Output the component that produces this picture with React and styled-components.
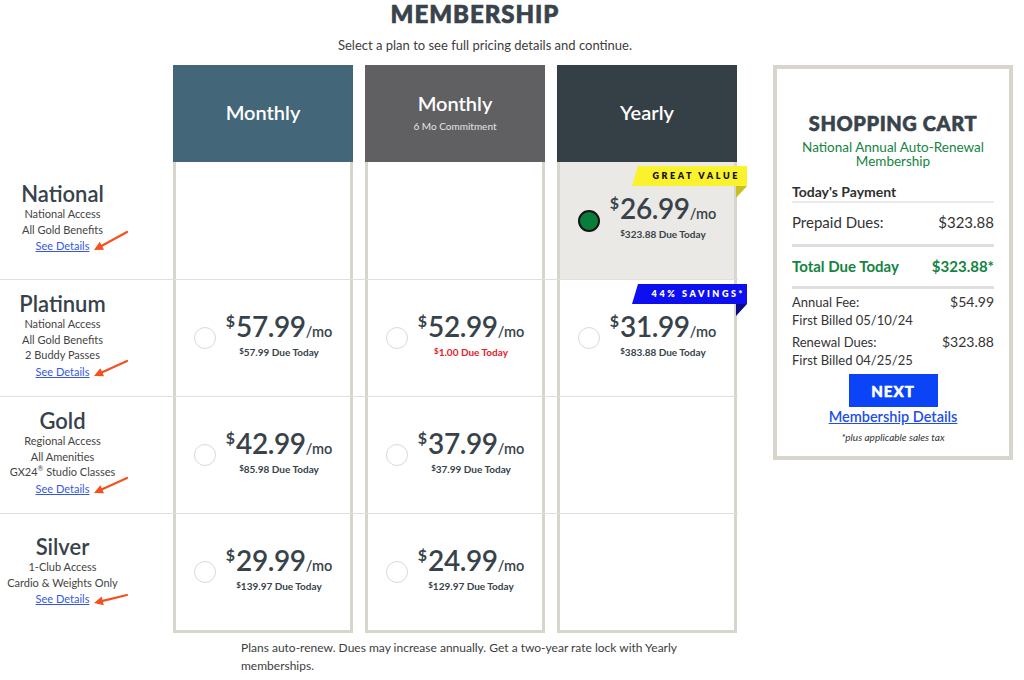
import React from "react";
import styled, { createGlobalStyle } from "styled-components";

const INK = "#37424a";
const COL_BORDER = "#d8d5cc";
const ROW_LINE = "#e2dfd8";
const GREEN = "#13843f";
const LINK = "#3558e3";

const GlobalStyle = createGlobalStyle`
  html, body { margin: 0; padding: 0; background: #fff; }
  body { font-family: Lato, "Open Sans", "DejaVu Sans", sans-serif; color: ${INK}; }
  * { box-sizing: border-box; }
`;

const Page = styled.div`
  width: 1024px;
  height: 680px;
  overflow: hidden;
`;

const Heading = styled.header`
  width: 960px;
  text-align: center;
  margin-bottom: 11px;
`;

const Title = styled.h1`
  margin: 0;
  padding-right: 10px;
  font-family: "Lato Black", Lato, sans-serif;
  font-weight: 900;
  font-size: 24px;
  line-height: 28px;
  letter-spacing: 1px;
  color: #38434b;
  -webkit-text-stroke: 0.7px #38434b;
`;

const Subtitle = styled.p`
  margin: 8px 0 0;
  padding-left: 10px;
  font-size: 13px;
  line-height: 18px;
  color: #3d3d3d;
`;

const Content = styled.div`
  display: flex;
  align-items: flex-start;
`;

const Main = styled.main`
  width: 773px;
  display: flex;
  flex-direction: column;
`;

const HeadRow = styled.div`
  display: flex;
  padding-left: 173px;
`;

const HeadCell = styled.div`
  width: 180px;
  height: 97px;
  padding-bottom: 4px;
  background: ${(p) => p.$bg};
  color: #fff;
  display: flex;
  flex-direction: column;
  align-items: center;
  justify-content: center;
  & + & {
    margin-left: ${(p) => p.$gap}px;
  }
`;

const HeadTitle = styled.div`
  font-weight: 600;
  font-size: 20px;
  line-height: 24px;
`;

const HeadSub = styled.div`
  margin-top: 4px;
  font-size: 10px;
  line-height: 14px;
  color: #e4e4e4;
`;

const Row = styled.div`
  display: flex;
  width: 738px;
  height: ${(p) => (p.$last ? 120 : 117)}px;
  border-top: ${(p) => (p.$divided ? `1px solid ${ROW_LINE}` : "none")};
`;

const LabelCell = styled.div`
  width: 173px;
  padding: 0 48px 6px 0;
  display: flex;
  flex-direction: column;
  align-items: center;
  justify-content: center;
  text-align: center;
`;

const PlanName = styled.div`
  font-weight: 600;
  font-size: 22px;
  line-height: 25px;
  color: ${INK};
`;

const PlanFeature = styled.div`
  font-size: 11px;
  line-height: 15.5px;
  color: #444;
  white-space: nowrap;
`;

const Mark = styled.sup`
  font-size: 7px;
  line-height: 0;
`;

const DetailsLink = styled.a`
  position: relative;
  margin-top: 1px;
  font-size: 11px;
  line-height: 15.5px;
  color: ${LINK};
  text-decoration: underline;
  cursor: pointer;
`;

const ArrowSvg = styled.svg`
  position: absolute;
  left: calc(100% + 3px);
  top: -8px;
  overflow: visible;
`;

const PlanCell = styled.div`
  position: relative;
  width: 180px;
  border-left: 3px solid ${COL_BORDER};
  border-right: 3px solid ${COL_BORDER};
  border-bottom: ${(p) => (p.$last ? `3px solid ${COL_BORDER}` : "none")};
  background: ${(p) => (p.$selected ? "#ebe9e5" : "transparent")};
  display: flex;
  align-items: center;
  justify-content: center;
  gap: 10px;
  & + & {
    margin-left: ${(p) => p.$gap}px;
  }
`;

const Radio = styled.span`
  flex-shrink: 0;
  width: 22px;
  height: 22px;
  border-radius: 50%;
  background: ${(p) => (p.$checked ? "#0b7d3a" : "#fff")};
  border: ${(p) => (p.$checked ? "2px solid #141414" : "1px solid #dcd9d1")};
`;

const PriceBlock = styled.div`
  padding-bottom: 10px;
  text-align: center;
`;

const PriceLine = styled.div`
  display: flex;
  align-items: baseline;
  justify-content: center;
  font-weight: 600;
  color: ${INK};
  white-space: nowrap;
`;

const Dollar = styled.span`
  align-self: flex-start;
  margin: 5px 1px 0 0;
  font-weight: 700;
  font-size: 16px;
  line-height: 15px;
`;

const Amount = styled.span`
  font-size: 28px;
  line-height: 36px;
  letter-spacing: -0.4px;
`;

const Per = styled.span`
  font-size: 14.5px;
`;

const DueLine = styled.div`
  font-weight: 700;
  font-size: 10px;
  line-height: 14px;
  color: ${(p) => (p.$red ? "#e8202a" : INK)};
  white-space: nowrap;
`;

const DueDollar = styled.span`
  font-size: 8px;
  vertical-align: 2px;
`;

const Ribbon = styled.div`
  position: absolute;
  top: 4px;
  right: -13px;
  width: 115px;
  display: flex;
  flex-direction: column;
  z-index: 2;
`;

const RibbonBand = styled.div`
  height: 20px;
  background: ${(p) => p.$bg};
  color: ${(p) => p.$fg};
  clip-path: polygon(6px 0, 100% 0, 100% 100%, 0 100%);
  font-weight: 800;
  font-size: 9px;
  line-height: 20px;
  letter-spacing: 2.6px;
  text-align: right;
  padding-right: ${(p) => p.$pad}px;
  white-space: nowrap;
`;

const RibbonFold = styled.div`
  align-self: flex-end;
  width: 11px;
  height: 12px;
  background: ${(p) => p.$bg};
  clip-path: polygon(0 0, 100% 0, 0 100%);
`;

const Footer = styled.p`
  margin: 6px 0 0 241px;
  width: 445px;
  font-size: 12px;
  line-height: 18px;
  color: #3d3d3d;
`;

const Cart = styled.aside`
  width: 240px;
  border: 4px solid ${COL_BORDER};
  padding: 42px 15px 12px;
  display: flex;
  flex-direction: column;
`;

const CartTitle = styled.h2`
  margin: 0;
  font-family: "Lato Black", Lato, sans-serif;
  font-weight: 900;
  font-size: 20px;
  line-height: 24px;
  letter-spacing: 0.6px;
  color: #38434b;
  text-align: center;
  -webkit-text-stroke: 0.6px #38434b;
`;

const CartPlan = styled.div`
  margin-top: 5px;
  font-size: 13.5px;
  line-height: 14px;
  color: ${GREEN};
  text-align: center;
`;

const SectionHead = styled.div`
  margin-top: 15px;
  font-weight: 700;
  font-size: 14px;
  line-height: 18px;
  color: #2f2f2f;
  border-bottom: 2px solid #ebebeb;
`;

const CartRow = styled.div`
  display: flex;
  justify-content: space-between;
  padding: ${(p) => (p.$total ? "9px 0 10px" : "9px 0 12px")};
  font-size: 15px;
  line-height: 20px;
  font-weight: ${(p) => (p.$total ? 700 : 400)};
  color: ${(p) => (p.$total ? GREEN : "#333")};
  border-bottom: 3px solid #dfdfdf;
`;

const DetailGroup = styled.div`
  padding-top: 4px;
`;

const DetailRow = styled.div`
  display: flex;
  justify-content: space-between;
  font-size: 13px;
  line-height: 18px;
  color: #333;
`;

const DetailValue = styled.span`
  font-size: 14px;
`;

const NextButton = styled.button`
  align-self: center;
  margin-top: 5px;
  width: 89px;
  height: 33px;
  border: none;
  background: #0a44f6;
  color: #fff;
  font-family: "Lato Black", Lato, sans-serif;
  font-weight: 900;
  font-size: 15px;
  letter-spacing: 1px;
  -webkit-text-stroke: 0.5px #fff;
  cursor: pointer;
`;

const CartLink = styled.a`
  align-self: center;
  font-weight: 600;
  font-size: 14.5px;
  line-height: 20px;
  color: #1d4fe8;
  text-decoration: underline;
  cursor: pointer;
`;

const TaxNote = styled.div`
  margin-top: 2.5px;
  font-style: italic;
  font-size: 10px;
  line-height: 14px;
  color: #333;
  text-align: center;
`;

function Arrow({ drop }) {
  const tip = [2, 20];
  const tail = [35, 20 - drop];
  const dx = tail[0] - tip[0];
  const dy = tail[1] - tip[1];
  const len = Math.hypot(dx, dy);
  const ux = dx / len;
  const uy = dy / len;
  const bx = tip[0] + ux * 9;
  const by = tip[1] + uy * 9;
  const px = -uy * 4.5;
  const py = ux * 4.5;
  const pts = `${tip[0]},${tip[1]} ${bx + px},${by + py} ${bx - px},${by - py}`;
  return (
    <ArrowSvg width="38" height="24" viewBox="0 0 38 24">
      <line x1={bx} y1={by} x2={tail[0]} y2={tail[1]} stroke="#f4511e" strokeWidth="2.2" strokeLinecap="round" />
      <polygon points={pts} fill="#f4511e" />
    </ArrowSvg>
  );
}

const headers = [
  { title: "Monthly", bg: "#436679" },
  { title: "Monthly", sub: "6 Mo Commitment", bg: "#606062" },
  { title: "Yearly", bg: "#343f46" },
];

const gaps = [0, 13, 12];

const rows = [
  {
    name: "National",
    features: ["National Access", "All Gold Benefits"],
    drop: 18,
    cells: [
      null,
      null,
      { price: "26.99", due: "323.88", selected: true, ribbon: "value" },
    ],
  },
  {
    name: "Platinum",
    features: ["National Access", "All Gold Benefits", "2 Buddy Passes"],
    drop: 15,
    cells: [
      { price: "57.99", due: "57.99" },
      { price: "52.99", due: "1.00", red: true },
      { price: "31.99", due: "383.88", ribbon: "savings" },
    ],
  },
  {
    name: "Gold",
    features: [
      "Regional Access",
      "All Amenities",
      <>
        GX24<Mark>®</Mark> Studio Classes
      </>,
    ],
    drop: 15,
    cells: [
      { price: "42.99", due: "85.98" },
      { price: "37.99", due: "37.99" },
      null,
    ],
  },
  {
    name: "Silver",
    features: ["1-Club Access", "Cardio & Weights Only"],
    drop: 8,
    cells: [
      { price: "29.99", due: "139.97" },
      { price: "24.99", due: "129.97" },
      null,
    ],
  },
];

const ribbons = {
  value: { text: "GREAT VALUE", bg: "#f9f22c", fg: "#111", fold: "#c7c01f", pad: 7 },
  savings: { text: "44% SAVINGS*", bg: "#0d0ff0", fg: "#fff", fold: "#0a0a86", pad: 2 },
};

function PlanRibbon({ kind }) {
  const r = ribbons[kind];
  return (
    <Ribbon>
      <RibbonBand $bg={r.bg} $fg={r.fg} $pad={r.pad}>
        {r.text}
      </RibbonBand>
      <RibbonFold $bg={r.fold} />
    </Ribbon>
  );
}

export default function App() {
  return (
    <Page>
      <GlobalStyle />
      <Heading>
        <Title>MEMBERSHIP</Title>
        <Subtitle>Select a plan to see full pricing details and continue.</Subtitle>
      </Heading>
      <Content>
        <Main>
          <HeadRow>
            {headers.map((h, i) => (
              <HeadCell key={i} $bg={h.bg} $gap={gaps[i]}>
                <HeadTitle>{h.title}</HeadTitle>
                {h.sub && <HeadSub>{h.sub}</HeadSub>}
              </HeadCell>
            ))}
          </HeadRow>
          {rows.map((r, ri) => {
            const last = ri === rows.length - 1;
            return (
              <Row key={r.name} $divided={ri > 0} $last={last}>
                <LabelCell>
                  <PlanName>{r.name}</PlanName>
                  {r.features.map((f, fi) => (
                    <PlanFeature key={fi}>{f}</PlanFeature>
                  ))}
                  <DetailsLink>
                    See Details
                    <Arrow drop={r.drop} />
                  </DetailsLink>
                </LabelCell>
                {r.cells.map((c, ci) => (
                  <PlanCell key={ci} $gap={gaps[ci]} $last={last} $selected={c && c.selected}>
                    {c && c.ribbon && <PlanRibbon kind={c.ribbon} />}
                    {c && (
                      <>
                        <Radio $checked={c.selected} />
                        <PriceBlock>
                          <PriceLine>
                            <Dollar>$</Dollar>
                            <Amount>{c.price}</Amount>
                            <Per>/mo</Per>
                          </PriceLine>
                          <DueLine $red={c.red}>
                            <DueDollar>$</DueDollar>
                            {c.due} Due Today
                          </DueLine>
                        </PriceBlock>
                      </>
                    )}
                  </PlanCell>
                ))}
              </Row>
            );
          })}
          <Footer>
            Plans auto-renew. Dues may increase annually. Get a two-year rate lock with Yearly memberships.
          </Footer>
        </Main>
        <Cart>
          <CartTitle>SHOPPING CART</CartTitle>
          <CartPlan>
            National Annual Auto-Renewal
            <br />
            Membership
          </CartPlan>
          <SectionHead>Today's Payment</SectionHead>
          <CartRow>
            <span>Prepaid Dues:</span>
            <span>$323.88</span>
          </CartRow>
          <CartRow $total>
            <span>Total Due Today</span>
            <span>$323.88*</span>
          </CartRow>
          <DetailGroup>
            <DetailRow>
              <span>Annual Fee:</span>
              <DetailValue>$54.99</DetailValue>
            </DetailRow>
            <DetailRow>
              <span>First Billed 05/10/24</span>
            </DetailRow>
          </DetailGroup>
          <DetailGroup>
            <DetailRow>
              <span>Renewal Dues:</span>
              <DetailValue>$323.88</DetailValue>
            </DetailRow>
            <DetailRow>
              <span>First Billed 04/25/25</span>
            </DetailRow>
          </DetailGroup>
          <NextButton>NEXT</NextButton>
          <CartLink>Membership Details</CartLink>
          <TaxNote>*plus applicable sales tax</TaxNote>
        </Cart>
      </Content>
    </Page>
  );
}
